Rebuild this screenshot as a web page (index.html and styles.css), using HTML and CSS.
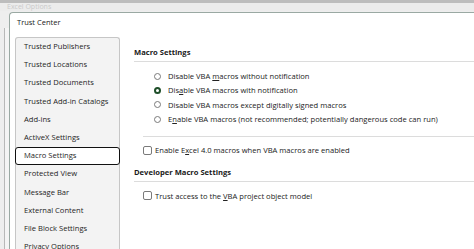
FILE: index.html
```html
<!DOCTYPE html>
<html>
<head>
<meta charset="utf-8">
<link rel="stylesheet" href="styles.css">
</head>
<body>
<div class="backdrop">
  <div class="bg-top"><span class="bg-title">Excel Options</span></div>
  <div class="bg-body">
    <div class="bg-rail"></div>
    <div class="dialog">
      <div class="titlebar">Trust Center</div>
      <div class="main">
        <nav class="nav">
          <div class="nav-item">Trusted Publishers</div>
          <div class="nav-item">Trusted Locations</div>
          <div class="nav-item">Trusted Documents</div>
          <div class="nav-item">Trusted Add-in Catalogs</div>
          <div class="nav-item">Add-ins</div>
          <div class="nav-item">ActiveX Settings</div>
          <div class="nav-item selected">Macro Settings</div>
          <div class="nav-item">Protected View</div>
          <div class="nav-item">Message Bar</div>
          <div class="nav-item">External Content</div>
          <div class="nav-item">File Block Settings</div>
          <div class="nav-item">Privacy Options</div>
        </nav>
        <section class="content">
          <h2 class="section-title">Macro Settings</h2>
          <div class="options">
            <div class="option"><span class="radio"></span><span>Disable VBA <u>m</u>acros without notification</span></div>
            <div class="option"><span class="radio checked"></span><span>Dis<u>a</u>ble VBA macros with notification</span></div>
            <div class="option"><span class="radio"></span><span>Disable VBA macros except digitally signed macros</span></div>
            <div class="option"><span class="radio"></span><span>E<u>n</u>able VBA macros (not recommended; potentially dangerous code can run)</span></div>
          </div>
          <div class="check-block">
            <div class="option"><span class="checkbox"></span><span>Enable E<u>x</u>cel 4.0 macros when VBA macros are enabled</span></div>
          </div>
          <h2 class="section-title dev">Developer Macro Settings</h2>
          <div class="check-block plain">
            <div class="option"><span class="checkbox"></span><span>Trust access to the <u>V</u>BA project object model</span></div>
          </div>
        </section>
      </div>
    </div>
  </div>
</div>
</body>
</html>
```
FILE: styles.css
```css
* { box-sizing: border-box; }
html, body { margin: 0; padding: 0; }
body {
  width: 474px;
  height: 249px;
  overflow: hidden;
  background: #eeeeee;
  font-family: "Open Sans", "Noto Sans", sans-serif;
  font-size: 7.6px;
  color: #222;
}
.backdrop { width: 474px; height: 249px; display: flex; flex-direction: column; overflow: hidden; }
.bg-top {
  flex: none;
  height: 11px;
  background: linear-gradient(#bdbdbd 0, #bdbdbd 3px, #ececec 3px);
  position: relative;
  overflow: hidden;
}
.bg-title {
  position: absolute;
  left: 7px;
  top: 3px;
  font-size: 7px;
  line-height: 8px;
  color: #cacaca;
}
.bg-body { flex: 1; min-height: 0; display: flex; padding-left: 4px; overflow: hidden; }
.bg-rail {
  width: 5px;
  margin-top: 17px;
  border-left: 1px solid #b8b8b8;
  background: #f4f4f4;
}
.dialog {
  flex: 1;
  margin-top: 1px;
  background: #ffffff;
  border: 1px solid #9aa9a3;
  border-right: none;
  border-bottom: none;
  border-top-left-radius: 4px;
  display: flex;
  flex-direction: column;
}
.titlebar {
  flex: none;
  height: 24px;
  padding: 3px 0 0 7px;
  font-size: 7.5px;
  line-height: 12px;
  color: #1a1a1a;
}
.main { flex: 1; min-height: 0; display: flex; }
.nav {
  flex: none;
  width: 105px;
  margin-left: 5px;
  background: #f3f3f3;
  border: 1px solid #c6c6c6;
  border-bottom: none;
  border-radius: 3px 3px 0 0;
}
.nav-item {
  height: 18.2px;
  line-height: 15.5px;
  padding-left: 8px;
  color: #1e1e1e;
  white-space: nowrap;
  border: 1.5px solid transparent;
  margin: 0 -1px;
}
.selected {
  background: #ffffff;
  border-color: #111;
  border-radius: 3px;
}
.content { flex: 1; padding: 9px 0 0 14px; }
.section-title {
  margin: 0;
  font-size: 7.6px;
  font-weight: 700;
  color: #1a1a1a;
  height: 16px;
  line-height: 12px;
  border-bottom: 1px solid #dcdcdc;
}
.options {
  padding: 7px 0 10px 11px;
  margin-left: 9px;
  border-bottom: 1px solid #dcdcdc;
}
.option {
  display: flex;
  align-items: center;
  height: 14.3px;
  white-space: nowrap;
  color: #222;
}
.option u { text-decoration-thickness: 1px; text-underline-offset: 1px; }
.radio {
  width: 7px;
  height: 7px;
  border: 1px solid #7a7a7a;
  border-radius: 50%;
  margin-right: 7px;
  flex: none;
}
.radio.checked {
  border: 2.2px solid #1f4f2a;
}
.check-block { padding: 6px 0 2px 9px; }
.check-block.plain { padding-top: 6px; }
.checkbox {
  width: 9px;
  height: 9px;
  border: 1px solid #7a7a7a;
  border-radius: 2px;
  margin-right: 3px;
  flex: none;
}
.dev { margin-top: 7px; }
```
